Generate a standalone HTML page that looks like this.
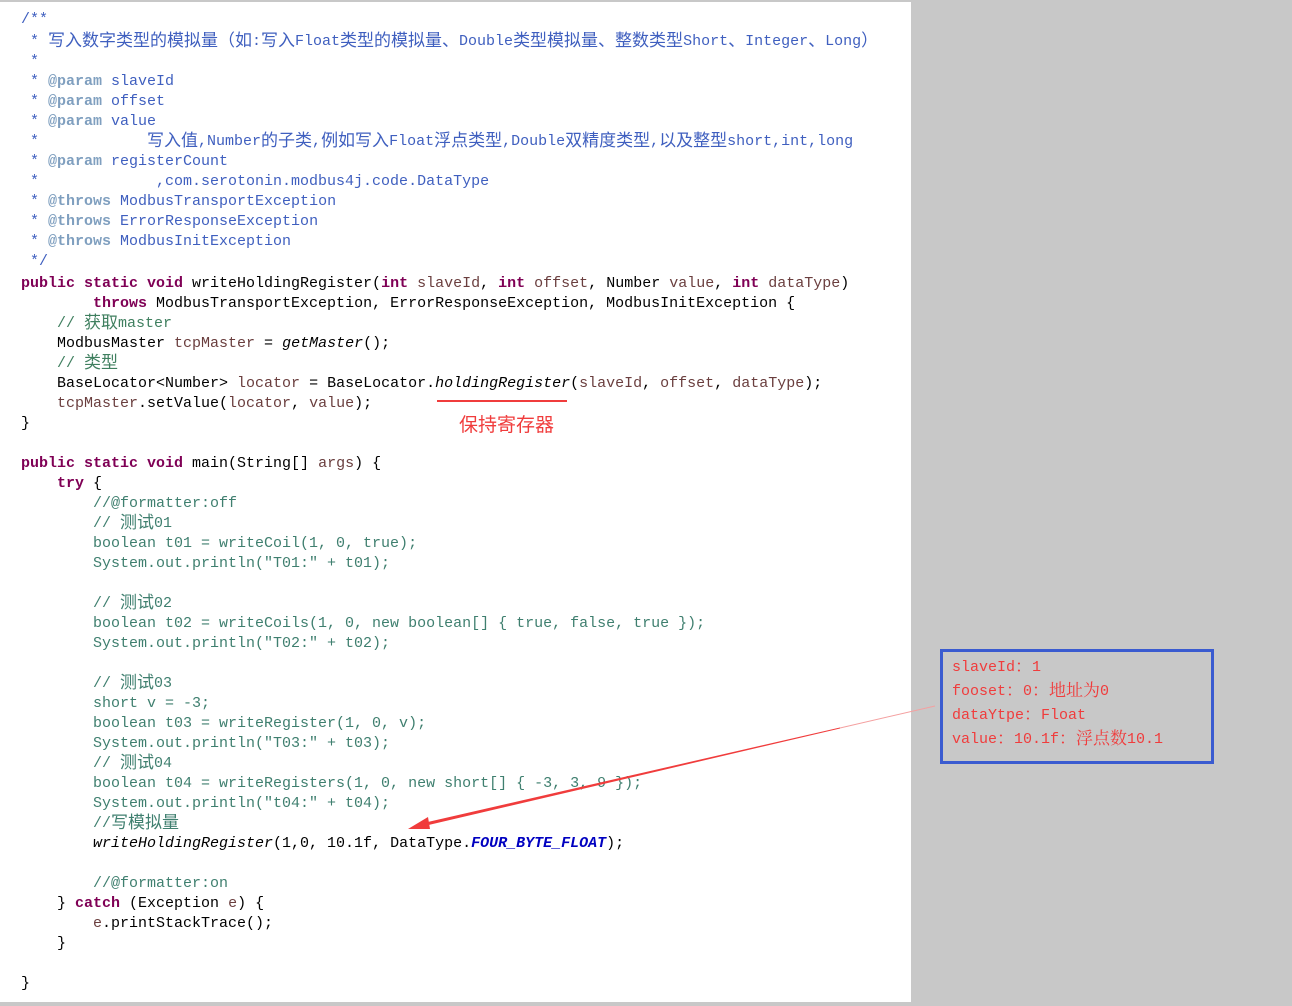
<!DOCTYPE html>
<html><head><meta charset="utf-8"><style>
html,body{margin:0;padding:0;}
body{width:1292px;height:1006px;background:#c8c8c8;position:relative;overflow:hidden;}
#pane{position:absolute;left:0;top:2px;width:911px;height:1000px;background:#fff;}
.l{position:absolute;left:21px;white-space:pre;font-family:"Liberation Mono","Noto Sans CJK SC",monospace;font-size:15px;line-height:20px;height:20px;color:#000;}
.z{display:inline-block;vertical-align:top;height:20px;font-size:17px;line-height:20px;font-family:"Noto Sans CJK SC",sans-serif;position:relative;top:-3px;}
.jd{color:#3f5fbf}
.tg{color:#7f9fbf;font-weight:bold}
.k{color:#7f0055;font-weight:bold}
.c{color:#3f7f5f}
.v{color:#6a3e3e}
.i{font-style:italic}
.f{color:#0000c0;font-weight:bold;font-style:italic}
.g{color:#3f7f6f}
#box{position:absolute;left:940px;top:649px;width:268px;height:109px;border:3px solid #3a5bd0;}
#box div{position:absolute;left:9px;font-family:"Liberation Mono","Noto Serif CJK SC",serif;font-size:15px;color:#f03c3c;white-space:pre;line-height:24px;height:24px;}
#box span{display:inline-block;vertical-align:top;height:24px;line-height:24px;font-family:"Noto Serif CJK SC",serif;font-size:17px;position:relative;top:-3px;}
</style></head><body>
<div id="pane"></div>
<div class="l jd" style="top:10px">/**</div>
<div class="l jd" style="top:32px"> * <span class="z">写入数字类型的模拟量（如</span>:<span class="z">写入</span>Float<span class="z">类型的模拟量、</span>Double<span class="z">类型模拟量、整数类型</span>Short<span class="z">、</span>Integer<span class="z">、</span>Long<span class="z">）</span></div>
<div class="l jd" style="top:52px"> *</div>
<div class="l jd" style="top:72px"> * <span class="tg">@param</span> slaveId</div>
<div class="l jd" style="top:92px"> * <span class="tg">@param</span> offset</div>
<div class="l jd" style="top:112px"> * <span class="tg">@param</span> value</div>
<div class="l jd" style="top:132px"> *            <span class="z">写入值</span>,Number<span class="z">的子类</span>,<span class="z">例如写入</span>Float<span class="z">浮点类型</span>,Double<span class="z">双精度类型</span>,<span class="z">以及整型</span>short,int,long</div>
<div class="l jd" style="top:152px"> * <span class="tg">@param</span> registerCount</div>
<div class="l jd" style="top:172px"> *             ,com.serotonin.modbus4j.code.DataType</div>
<div class="l jd" style="top:192px"> * <span class="tg">@throws</span> ModbusTransportException</div>
<div class="l jd" style="top:212px"> * <span class="tg">@throws</span> ErrorResponseException</div>
<div class="l jd" style="top:232px"> * <span class="tg">@throws</span> ModbusInitException</div>
<div class="l jd" style="top:252px"> */</div>
<div class="l" style="top:274px"><span class="k">public static void</span> writeHoldingRegister(<span class="k">int</span> <span class="v">slaveId</span>, <span class="k">int</span> <span class="v">offset</span>, Number <span class="v">value</span>, <span class="k">int</span> <span class="v">dataType</span>)</div>
<div class="l" style="top:294px">        <span class="k">throws</span> ModbusTransportException, ErrorResponseException, ModbusInitException {</div>
<div class="l c" style="top:314px">    // <span class="z">获取</span>master</div>
<div class="l" style="top:334px">    ModbusMaster <span class="v">tcpMaster</span> = <span class="i">getMaster</span>();</div>
<div class="l c" style="top:354px">    // <span class="z">类型</span></div>
<div class="l" style="top:374px">    BaseLocator&lt;Number&gt; <span class="v">locator</span> = BaseLocator.<span class="i">holdingRegister</span>(<span class="v">slaveId</span>, <span class="v">offset</span>, <span class="v">dataType</span>);</div>
<div class="l" style="top:394px">    <span class="v">tcpMaster</span>.setValue(<span class="v">locator</span>, <span class="v">value</span>);</div>
<div class="l" style="top:414px">}</div>
<div class="l" style="top:454px"><span class="k">public static void</span> main(String[] <span class="v">args</span>) {</div>
<div class="l" style="top:474px">    <span class="k">try</span> {</div>
<div class="l g" style="top:494px">        //@formatter:off</div>
<div class="l g" style="top:514px">        // <span class="z">测试</span>01</div>
<div class="l g" style="top:534px">        boolean t01 = writeCoil(1, 0, true);</div>
<div class="l g" style="top:554px">        System.out.println("T01:" + t01);</div>
<div class="l g" style="top:594px">        // <span class="z">测试</span>02</div>
<div class="l g" style="top:614px">        boolean t02 = writeCoils(1, 0, new boolean[] { true, false, true });</div>
<div class="l g" style="top:634px">        System.out.println("T02:" + t02);</div>
<div class="l g" style="top:674px">        // <span class="z">测试</span>03</div>
<div class="l g" style="top:694px">        short v = -3;</div>
<div class="l g" style="top:714px">        boolean t03 = writeRegister(1, 0, v);</div>
<div class="l g" style="top:734px">        System.out.println("T03:" + t03);</div>
<div class="l g" style="top:754px">        // <span class="z">测试</span>04</div>
<div class="l g" style="top:774px">        boolean t04 = writeRegisters(1, 0, new short[] { -3, 3, 9 });</div>
<div class="l g" style="top:794px">        System.out.println("t04:" + t04);</div>
<div class="l g" style="top:814px">        //<span class="z">写模拟量</span></div>
<div class="l" style="top:834px">        <span class="i">writeHoldingRegister</span>(1,0, 10.1f, DataType.<span class="f">FOUR_BYTE_FLOAT</span>);</div>
<div class="l g" style="top:874px">        //@formatter:on</div>
<div class="l" style="top:894px">    } <span class="k">catch</span> (Exception <span class="v">e</span>) {</div>
<div class="l" style="top:914px">        <span class="v">e</span>.printStackTrace();</div>
<div class="l" style="top:934px">    }</div>
<div class="l" style="top:974px">}</div>
<div style="position:absolute;left:437px;top:400px;width:130px;height:2px;background:#f03c3c"></div>
<div style="position:absolute;left:459px;top:412px;font-family:'Noto Sans CJK SC',sans-serif;font-size:19px;line-height:24px;color:#f03c3c;">保持寄存器</div>
<svg style="position:absolute;left:0;top:0" width="1292" height="1006">
<line x1="935" y1="706" x2="840" y2="728" stroke="#f4a0a0" stroke-width="1"/>
<polygon points="840,727.5 840,728.5 420,827 419,824" fill="#f03c3c"/>
<polygon points="408,829 428,817 430,829" fill="#f03c3c"/>
</svg>
<div id="box">
<div style="top:4px">slaveId<span>：</span>1</div>
<div style="top:28px">fooset<span>：</span>0<span>：地址为</span>0</div>
<div style="top:52px">dataYtpe<span>：</span>Float</div>
<div style="top:76px">value<span>：</span>10.1f<span>：浮点数</span>10.1</div>
</div>
</body></html>
